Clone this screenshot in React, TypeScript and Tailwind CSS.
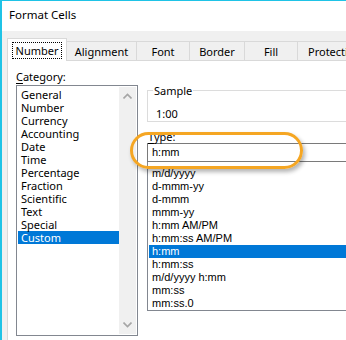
import React from 'react';

const categories = [
  'General', 'Number', 'Currency', 'Accounting', 'Date', 'Time',
  'Percentage', 'Fraction', 'Scientific', 'Text', 'Special', 'Custom',
];

const types = [
  'm/d/yyyy', 'd-mmm-yy', 'd-mmm', 'mmm-yy', 'h:mm AM/PM', 'h:mm:ss AM/PM',
  'h:mm', 'h:mm:ss', 'm/d/yyyy h:mm', 'mm:ss', 'mm:ss.0',
];

const ui = { fontFamily: '"Noto Sans", "Liberation Sans", sans-serif' };
const list = { fontFamily: '"Liberation Sans", Arial, sans-serif' };

function Chevron({ up }: { up?: boolean }) {
  return (
    <svg width="9" height="6" viewBox="0 0 9 6" className="block">
      <path
        d={up ? 'M0.5 5.5 L4.5 1.5 L8.5 5.5' : 'M0.5 0.5 L4.5 4.5 L8.5 0.5'}
        fill="none"
        stroke="#a6a6a6"
        strokeWidth="1.6"
      />
    </svg>
  );
}

export default function App() {
  return (
    <div
      className="relative w-[346px] h-[340px] overflow-hidden flex flex-col border-l-2 border-t border-[#1fc3e6] text-black"
      style={ui}
    >
      {/* title bar */}
      <div className="h-[30px] shrink-0 bg-white flex items-center pl-[7px] pb-[2px] text-[11.5px]">
        Format Cells
      </div>

      {/* dialog body */}
      <div className="flex-1 bg-[#f0f0f0] pt-[7px] pl-[5px]">
        {/* tabs */}
        <div className="flex items-end h-[22px] text-[11px] leading-[13px]">
          <div className="relative z-10 shrink-0 w-[60px] h-[23px] -mb-px bg-white border border-b-0 border-[#d9d9d9] flex items-start justify-center pt-[3px]">
            <span className="border border-dotted border-black px-[3px] py-px">Number</span>
          </div>
          <div className="shrink-0 w-[70px] h-[19px] border-t border-r border-[#d9d9d9] flex items-center justify-center">Alignment</div>
          <div className="shrink-0 w-[53px] h-[19px] border-t border-r border-[#d9d9d9] flex items-center justify-center">Font</div>
          <div className="shrink-0 w-[55px] h-[19px] border-t border-r border-[#d9d9d9] flex items-center justify-center">Border</div>
          <div className="shrink-0 w-[53px] h-[19px] border-t border-r border-[#d9d9d9] flex items-center justify-center">Fill</div>
          <div className="shrink-0 w-[70px] h-[19px] border-t border-[#d9d9d9] flex items-center pl-[10px] whitespace-nowrap">Protection</div>
        </div>

        {/* panel */}
        <div className="h-[290px] bg-white border-t border-l border-[#d9d9d9] flex pl-[8px] gap-[9px] text-[11px] leading-[13px]">
          {/* category column */}
          <div className="w-[122px] shrink-0 pt-[9px]">
            <div className="h-[14px] leading-[14px]">
              <span className="underline underline-offset-2">C</span>ategory:
            </div>
            <div className="mt-px h-[251px] border border-[#828790] flex p-px">
              <div className="flex-1 pt-px">
                {categories.map(c => (
                  <div
                    key={c}
                    className={
                      'h-[13px] leading-[13px] pl-[3px] ' +
                      (c === 'Custom' ? 'bg-[#0078d7] text-white' : '')
                    }
                  >
                    {c}
                  </div>
                ))}
              </div>
              <div className="w-[17px] bg-[#f0f0f0] flex flex-col items-center justify-between py-[6px]">
                <Chevron up />
                <Chevron />
              </div>
            </div>
          </div>

          {/* type column */}
          <div className="w-[220px] shrink-0 pt-[24px]">
            <fieldset className="h-[38px] border border-[#dcdcdc] px-[5px] -mt-[1px]">
              <legend className="px-px leading-[13px]">Sample</legend>
              <div className="pl-[3px] pt-[10px]">1:00</div>
            </fieldset>
            <div className="mt-[7px] h-[14px] flex items-end leading-[12px] pl-px">
              <span>
                <span className="underline underline-offset-2">T</span>ype:
              </span>
            </div>
            <div className="h-[19px] border border-[#7a7a7a] pl-[4px] flex items-center text-[11px]" style={list}>
              h:mm
            </div>
            <div className="h-[149px] border border-t-0 border-[#828790] px-px pt-[5px] text-[11px]" style={list}>
              {types.map((t, i) => (
                <div
                  key={i}
                  className={'h-[13px] leading-[13px] pl-[3px] ' + (i === 6 ? 'bg-[#0078d7] text-white' : '')}
                >
                  {t}
                </div>
              ))}
            </div>
          </div>
        </div>
      </div>

      {/* highlight marker round the Type box */}
      <div className="absolute left-[128px] top-[131px] w-[173px] h-[37px] rounded-full border-[3px] border-[#f5a623] shadow-[2px_3px_4px_rgba(0,0,0,0.3)]" />
    </div>
  );
}
